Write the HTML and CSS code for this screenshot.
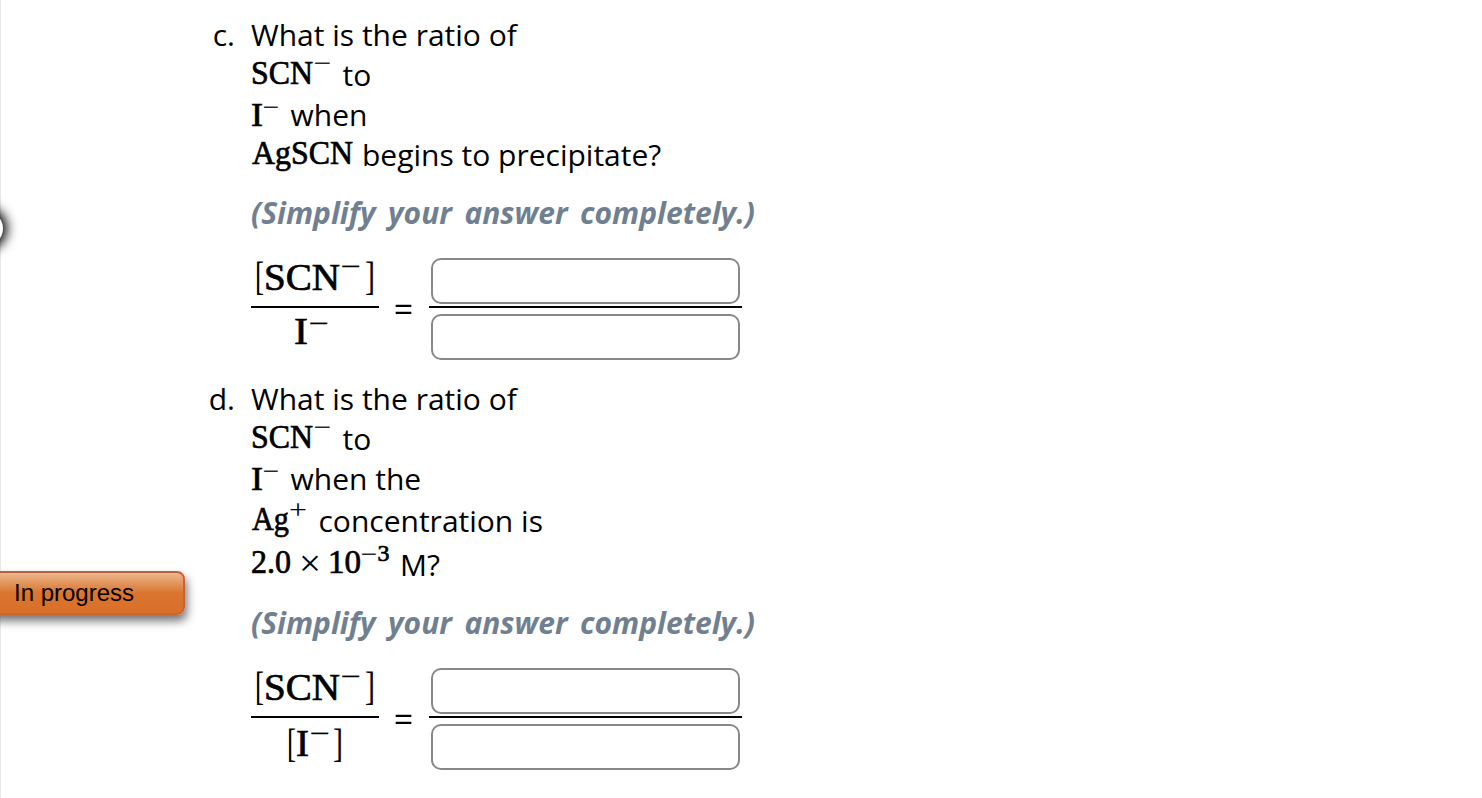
FILE: index.html
```
<!DOCTYPE html>
<html lang="en">
<head>
<meta charset="utf-8">
<title>Solubility question</title>
<link rel="stylesheet" href="styles.css">
</head>
<body>
<main class="page">
  <section class="question">
    <div class="marker">c.</div>
    <div class="body">
      <div class="line">What is the ratio of</div>
      <div class="line"><svg class="math w-scn" height="40"><text x="0" y="28.5" textLength="62" lengthAdjust="spacingAndGlyphs">SCN</text><text class="sup" x="63" y="16" textLength="17" lengthAdjust="spacingAndGlyphs">−</text></svg>to</div>
      <div class="line"><svg class="math w-i" height="40"><text x="0" y="31" textLength="12" lengthAdjust="spacingAndGlyphs">I</text><text class="sup" x="12" y="20" textLength="16" lengthAdjust="spacingAndGlyphs">−</text></svg>when</div>
      <div class="line"><svg class="math w-agscn" height="40"><text x="1" y="29" textLength="101" lengthAdjust="spacingAndGlyphs">AgSCN</text></svg>begins to precipitate?</div>
      <p class="hint">(Simplify your answer completely.)</p>
      <div class="equation">
        <svg class="ratio" width="128" height="110"><text class="bracket" x="4" y="40" textLength="9" lengthAdjust="spacingAndGlyphs">[</text><text x="13" y="40" textLength="76" lengthAdjust="spacingAndGlyphs">SCN</text><text class="sup" x="90" y="25" textLength="20" lengthAdjust="spacingAndGlyphs">−</text><text class="bracket" x="114" y="40" textLength="10" lengthAdjust="spacingAndGlyphs">]</text><rect x="0" y="56" width="128" height="2"/><text x="43" y="94" textLength="14" lengthAdjust="spacingAndGlyphs">I</text><text class="sup" x="58" y="82" textLength="20" lengthAdjust="spacingAndGlyphs">−</text></svg>
        <span class="equals">=</span>
        <div class="answer"><input aria-label="Numerator"><div class="bar"></div><input aria-label="Denominator"></div>
      </div>
    </div>
  </section>
  <section class="question second">
    <div class="marker">d.</div>
    <div class="body">
      <div class="line">What is the ratio of</div>
      <div class="line"><svg class="math w-scn" height="40"><text x="0" y="28.5" textLength="62" lengthAdjust="spacingAndGlyphs">SCN</text><text class="sup" x="63" y="16" textLength="17" lengthAdjust="spacingAndGlyphs">−</text></svg>to</div>
      <div class="line"><svg class="math w-i" height="40"><text x="0" y="31" textLength="12" lengthAdjust="spacingAndGlyphs">I</text><text class="sup" x="12" y="20" textLength="16" lengthAdjust="spacingAndGlyphs">−</text></svg>when the</div>
      <div class="line tall"><svg class="math w-ag" height="40"><text x="1" y="30" textLength="37" lengthAdjust="spacingAndGlyphs">Ag</text><text class="sup plus" x="38" y="19" textLength="18" lengthAdjust="spacingAndGlyphs">+</text></svg>concentration is</div>
      <div class="line power"><svg class="math w-pow" height="40"><text x="0" y="29" textLength="40" lengthAdjust="spacingAndGlyphs">2.0</text><text class="times" x="48" y="32" textLength="22" lengthAdjust="spacingAndGlyphs">×</text><text x="77" y="29" textLength="33" lengthAdjust="spacingAndGlyphs">10</text><text class="sup" x="110" y="18" textLength="16" lengthAdjust="spacingAndGlyphs">−</text><text class="exp" x="126.5" y="17" textLength="12" lengthAdjust="spacingAndGlyphs">3</text></svg>M?</div>
      <p class="hint">(Simplify your answer completely.)</p>
      <div class="equation">
        <svg class="ratio" width="128" height="110"><text class="bracket" x="4" y="40" textLength="9" lengthAdjust="spacingAndGlyphs">[</text><text x="13" y="40" textLength="76" lengthAdjust="spacingAndGlyphs">SCN</text><text class="sup" x="90" y="25" textLength="20" lengthAdjust="spacingAndGlyphs">−</text><text class="bracket" x="114" y="40" textLength="10" lengthAdjust="spacingAndGlyphs">]</text><rect x="0" y="56" width="128" height="2"/><text class="bracket" x="36" y="97" textLength="9" lengthAdjust="spacingAndGlyphs">[</text><text x="45" y="96" textLength="13" lengthAdjust="spacingAndGlyphs">I</text><text class="sup" x="59" y="82" textLength="20" lengthAdjust="spacingAndGlyphs">−</text><text class="bracket" x="82" y="97" textLength="10" lengthAdjust="spacingAndGlyphs">]</text></svg>
        <span class="equals">=</span>
        <div class="answer"><input aria-label="Numerator"><div class="bar"></div><input aria-label="Denominator"></div>
      </div>
    </div>
  </section>
  <div class="handle"></div>
  <div class="status">In progress</div>
</main>
</body>
</html>
```
FILE: styles.css
```
* { box-sizing: border-box; }
body { margin: 0; background: #fff; color: #000; font-family: "Open Sans", "Noto Sans", sans-serif; }
.page {
  position: relative;
  height: 798px;
  overflow: hidden;
  box-shadow: inset 1px 0 #e8e8e8;
  padding: 15px 0 0 1px;
}
.question { display: flex; height: 364px; font-size: 30px; line-height: 40px; }
.question.second { height: 410px; }
.marker { width: 234px; text-align: right; flex: none; }
.body { margin-left: 16px; }
.line { display: flex; height: 40px; white-space: nowrap; }
.line.tall { height: 42px; padding-top: 2px; }
.line.power { height: 44px; padding-top: 4px; }
.math { flex: none; overflow: visible; font: 33px/1 "Liberation Serif", serif; }
.line.tall .math, .line.power .math { margin-top: -1px; }
.math text, .ratio text { fill: #000; stroke: #000; stroke-width: .7px; }
.w-scn { width: 91.5px; }
.w-i { width: 39.5px; }
.w-agscn { width: 111px; }
.w-ag { width: 67.5px; }
.w-pow { width: 149px; }
.math .sup { font-size: 24px; stroke-width: .3px; }
.math .plus { font-size: 28px; stroke: none; }
.math .exp { font-size: 23px; }
.math .times { font-size: 38px; stroke: none; }
.hint {
  height: 40px;
  margin: 18px 0 0;
  color: #708090;
  font-size: 30px;
  font-weight: 700;
  font-style: italic;
  word-spacing: 4.7px;
  white-space: nowrap;
}
.equation { display: flex; height: 110px; margin-top: 17px; }
.ratio { flex: none; overflow: visible; font: 37px/1 "Liberation Serif", serif; }
.ratio .sup { font-size: 26px; stroke-width: .3px; }
.ratio .bracket { font-size: 41px; stroke-width: 0; }
.equals { width: 50px; padding-top: 39px; text-align: center; font-size: 34px; text-indent: -1px; }
.answer { width: 313px; padding: 8px 0 0; }
.answer input {
  display: block;
  width: 309px;
  height: 46px;
  margin: 0 2px;
  border: 2px solid #888;
  border-radius: 10px;
  background: #fff;
  outline: 0;
}
.bar { height: 2px; margin: 2px 0 6px; background: #000; }
.handle {
  position: absolute;
  left: -32px;
  top: 211px;
  width: 35px;
  height: 35px;
  border-radius: 50%;
  background: #fff;
  box-shadow: 0 0 12px 4px #000;
}
.status {
  position: absolute;
  left: -11px;
  top: 571px;
  width: 196px;
  height: 44px;
  padding-left: 23px;
  border: 2px solid #b9603c;
  border-color: #b9603c #c86238 #cc6532;
  border-radius: 8px;
  background: linear-gradient(#ebb78c, #da742e 50%, #d9702a);
  box-shadow: 2px 6px 10px rgba(0, 0, 0, .55);
  font: 24px/39px "Liberation Sans", Arial, sans-serif;
}
```
